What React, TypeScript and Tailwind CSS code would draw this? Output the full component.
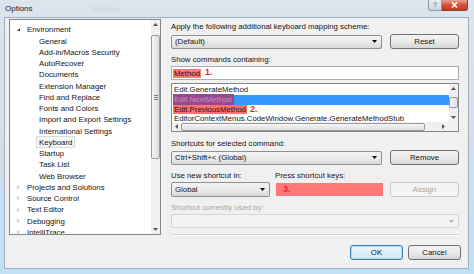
import React from 'react';

const treeItems: { label: string; level: 0 | 1; state?: 'open' | 'closed'; selected?: boolean }[] = [
  { label: 'Environment', level: 0, state: 'open' },
  { label: 'General', level: 1 },
  { label: 'Add-in/Macros Security', level: 1 },
  { label: 'AutoRecover', level: 1 },
  { label: 'Documents', level: 1 },
  { label: 'Extension Manager', level: 1 },
  { label: 'Find and Replace', level: 1 },
  { label: 'Fonts and Colors', level: 1 },
  { label: 'Import and Export Settings', level: 1 },
  { label: 'International Settings', level: 1 },
  { label: 'Keyboard', level: 1, selected: true },
  { label: 'Startup', level: 1 },
  { label: 'Task List', level: 1 },
  { label: 'Web Browser', level: 1 },
  { label: 'Projects and Solutions', level: 0, state: 'closed' },
  { label: 'Source Control', level: 0, state: 'closed' },
  { label: 'Text Editor', level: 0, state: 'closed' },
  { label: 'Debugging', level: 0, state: 'closed' },
  { label: 'IntelliTrace', level: 0, state: 'closed' },
];

const DownArrow = ({ color = '#000' }: { color?: string }) => (
  <svg width="5" height="3" viewBox="0 0 5 3">
    <path d="M0 0h5L2.5 3z" fill={color} />
  </svg>
);

const ComboBox = ({ text, className = '', disabled = false }: { text: string; className?: string; disabled?: boolean }) => (
  <div
    className={`flex items-center rounded-[2px] border pl-[3px] pr-[4px] ${
      disabled
        ? 'border-[#d5d5d5] bg-[#f4f4f4] text-[#a0a0a0]'
        : 'border-[#8e8f8f] bg-linear-to-b from-[#f3f3f3] via-[#ebebeb] to-[#d9d9d9]'
    } ${className}`}
  >
    <span className="flex-1 truncate">{text}</span>
    <DownArrow color={disabled ? '#b5b5b5' : '#000'} />
  </div>
);

const Button = ({ children, className = '', disabled = false, focused = false }: { children: React.ReactNode; className?: string; disabled?: boolean; focused?: boolean }) => (
  <div
    className={`flex items-center justify-center rounded-[3px] border ${
      disabled
        ? 'border-[#c9c9c9] bg-[#f4f4f4] text-[#a3a3a3]'
        : focused
        ? 'border-[#3c7fb1] bg-linear-to-b from-[#eaf6fd] to-[#cfe6f4] shadow-[inset_0_0_0_1px_#a8dbf5]'
        : 'border-[#707070] bg-linear-to-b from-[#f2f2f2] via-[#ebebeb] to-[#d6d6d6]'
    } ${className}`}
  >
    {children}
  </div>
);

const VScrollbar = ({ thumbTop, thumbHeight, grip = false }: { thumbTop: number; thumbHeight: number; grip?: boolean }) => (
  <div className="relative flex w-[9px] flex-col items-center bg-[#f0f0f0]">
    <div className="flex h-[9px] items-center justify-center">
      <svg width="5" height="3" viewBox="0 0 5 3"><path d="M0 3h5L2.5 0z" fill="#555" /></svg>
    </div>
    <div className="flex-1" />
    <div className="flex h-[9px] items-center justify-center">
      <DownArrow color="#555" />
    </div>
    <div
      className="absolute left-0 right-0 flex items-center justify-center rounded-[2px] border border-[#9a9a9a] bg-linear-to-r from-[#f5f5f5] to-[#dedede]"
      style={{ top: thumbTop, height: thumbHeight }}
    >
      {grip && (
        <div className="flex flex-col gap-[1px]">
          <div className="h-px w-[4px] bg-[#777]" />
          <div className="h-px w-[4px] bg-[#777]" />
          <div className="h-px w-[4px] bg-[#777]" />
        </div>
      )}
    </div>
  </div>
);

const Expander = ({ state }: { state?: 'open' | 'closed' }) => {
  if (state === 'open')
    return (
      <svg width="5" height="5" viewBox="0 0 5 5">
        <path d="M5 0v5H0z" fill="#333" />
      </svg>
    );
  if (state === 'closed')
    return (
      <svg width="5" height="6" viewBox="0 0 5 6">
        <path d="M0.5 0.5v5l4-2.5z" fill="none" stroke="#a6a6a6" strokeWidth="0.9" />
      </svg>
    );
  return null;
};

export default function App() {
  return (
    <div className="flex h-[274px] w-[474px] flex-col overflow-hidden bg-linear-to-b from-[#dce5ee] via-[#d3dfeb] to-[#bfe1f5] font-['Liberation_Sans',Arial,sans-serif] text-[7.8px] text-[#141414]">
      {/* Title bar */}
      <div className="relative flex h-[17px] shrink-0 items-start justify-between pl-[5px] pr-[6px]">
        <span className="pt-[3px] text-[8px] text-[#1a1a1a]">Options</span>
        <span className="absolute left-[92px] top-[4px] text-[8px] text-[#c2ccd6] blur-[1px]">Toolbox</span>
        <div className="flex">
          <div className="flex h-[11px] w-[14px] items-center justify-center rounded-bl-[3px] border border-t-0 border-[#8b98a8] bg-linear-to-b from-[#e9eef4] to-[#c9d4df] text-[7px] text-[#5d6b7a]">
            ?
          </div>
          <div className="flex h-[11px] w-[26px] items-center justify-center rounded-br-[3px] border border-l-0 border-t-0 border-[#8a3d33] bg-linear-to-b from-[#e8a194] via-[#d3503a] to-[#c43a20]">
            <svg width="7" height="6" viewBox="0 0 7 6">
              <path d="M1 0.5l5 5M6 0.5l-5 5" stroke="#fff" strokeWidth="1.5" />
            </svg>
          </div>
        </div>
      </div>

      {/* Client area */}
      <div className="mb-[5px] ml-[4px] mr-[5px] flex flex-1 border border-[#9fadbc] bg-[#f0f0f0]">
        {/* Tree view */}
        <div className="ml-[4px] mt-[1px] flex h-[216px] w-[152px] border border-[#828790] bg-white">
          <div className="flex-1 overflow-hidden pt-[4px]">
            {treeItems.map((item) => (
              <div key={item.label} className="flex h-[11.25px] items-center">
                <div className="flex w-[10px] justify-end pl-[7px]">
                  <Expander state={item.state} />
                </div>
                <div className={item.level === 1 ? 'ml-[16px]' : 'ml-[4px]'}>
                  <span
                    className={`whitespace-nowrap px-[2px] py-[0.5px] ${
                      item.selected ? 'rounded-[1px] border border-[#d9d9d9] bg-[#f7f7f7]' : 'border border-transparent'
                    }`}
                  >
                    {item.label}
                  </span>
                </div>
              </div>
            ))}
          </div>
          <VScrollbar thumbTop={15} thumbHeight={124} grip />
        </div>

        {/* Right column */}
        <div className="ml-[10px] flex w-[289px] flex-col">
          <div className="mt-[4px] h-[10px] leading-[10px]">Apply the following additional keyboard mapping scheme:</div>
          <div className="mt-[2px] flex h-[15px] items-center">
            <ComboBox text="(Default)" className="h-[14px] w-[211px]" />
            <Button className="ml-[8px] h-[15px] w-[69px]">Reset</Button>
          </div>

          <div className="mt-[6px] h-[10px] leading-[10px]">Show commands containing:</div>
          <div className="mt-[1px] flex h-[14px] w-[288px] items-center border border-[#abadb3] bg-white pl-[1px]">
            <span className="bg-[#ff7878] px-[1px] leading-[9px]">Method</span>
            <span className="ml-[4px] text-[9px] font-bold text-[#e8232a]">1.</span>
          </div>

          <div className="mt-[3px] flex h-[49px] w-[288px] flex-col border border-[#828790] bg-white">
            <div className="flex flex-1 overflow-hidden">
              <div className="flex-1 overflow-hidden pl-[1px] pt-[1px]">
                <div className="flex h-[9.75px] items-center whitespace-nowrap pl-[1px]">Edit.GenerateMethod</div>
                <div className="flex h-[9.75px] items-center whitespace-nowrap bg-[#3399ff]">
                  <span className="bg-[#98488f] pl-[1px] pr-[2px] text-[#c98fc3]">Edit.NextMethod</span>
                </div>
                <div className="flex h-[9.75px] items-center whitespace-nowrap">
                  <span className="bg-[#ff6f6f] pl-[1px] pr-[1px] leading-[9.5px]">Edit.PreviousMethod</span>
                  <span className="ml-[3px] text-[9px] font-bold text-[#e8232a]">2.</span>
                </div>
                <div className="flex h-[9.75px] items-center whitespace-nowrap pl-[1px]">
                  EditorContextMenus.CodeWindow.Generate.GenerateMethodStub
                </div>
              </div>
              <VScrollbar thumbTop={13} thumbHeight={11} />
            </div>
            <div className="relative flex h-[9px] items-center bg-[#f0f0f0]">
              <div className="flex w-[9px] justify-center">
                <svg width="3" height="5" viewBox="0 0 3 5"><path d="M3 0v5L0 2.5z" fill="#555" /></svg>
              </div>
              <div className="h-[8px] w-[244px] rounded-[2px] border border-[#9a9a9a] bg-linear-to-b from-[#f5f5f5] to-[#dedede]" />
              <div className="flex-1" />
              <div className="flex w-[18px] justify-start pl-[2px]">
                <svg width="3" height="5" viewBox="0 0 3 5"><path d="M0 0v5l3-2.5z" fill="#555" /></svg>
              </div>
            </div>
          </div>

          <div className="mt-[7px] h-[10px] leading-[10px]">Shortcuts for selected command:</div>
          <div className="mt-[1px] flex h-[15px] items-center">
            <ComboBox text="Ctrl+Shift+< (Global)" className="h-[14px] w-[211px]" />
            <Button className="ml-[8px] h-[15px] w-[69px]">Remove</Button>
          </div>

          <div className="mt-[6px] flex h-[10px] leading-[10px]">
            <span className="w-[104px]">Use new shortcut in:</span>
            <span>Press shortcut keys:</span>
          </div>
          <div className="mt-[1px] flex h-[15px] items-center">
            <ComboBox text="Global" className="h-[15px] w-[99px]" />
            <div className="ml-[6px] flex h-[13px] w-[107px] items-center bg-[#ff7878] pl-[7px]">
              <span className="text-[9px] font-bold text-[#e8232a]">3.</span>
            </div>
            <Button disabled className="ml-[7px] h-[15px] w-[69px]">Assign</Button>
          </div>

          <div className="mt-[6px] h-[10px] leading-[10px] text-[#a8a8a8]">Shortcut currently used by:</div>
          <ComboBox text="" disabled className="mt-[1px] h-[14px] w-[288px]" />

          <div className="mt-[6px] h-px w-[288px] bg-[#d5d5d5]" />
          <div className="h-px w-[288px] bg-white" />

          <div className="-mr-[1px] mt-[9px] flex h-[15px] justify-end gap-[5px]">
            <Button focused className="h-[15px] w-[53px]">OK</Button>
            <Button className="h-[15px] w-[53px]">Cancel</Button>
          </div>
        </div>
      </div>
    </div>
  );
}
